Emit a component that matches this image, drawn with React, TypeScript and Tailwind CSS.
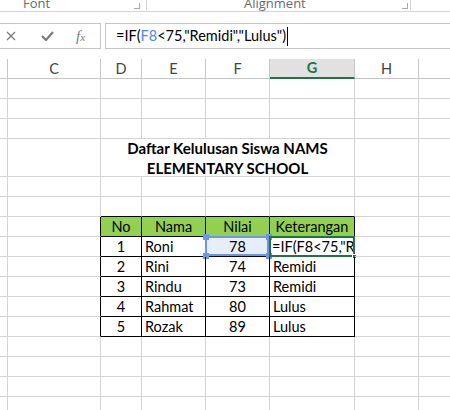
import React from "react"

const W = ["w-[8px]", "w-[93px]", "w-[41px]", "w-[64px]", "w-[64px]", "w-[85px]", "w-[64px]", "w-[64px]"]
const COLS = ["B", "C", "D", "E", "F", "G", "H", "I"]

type Cell = { text?: string; cls?: string; node?: React.ReactNode }

function Row({ cells, h = "h-[20px]" }: { cells: Cell[]; h?: string }) {
  return (
    <div className={`flex ${h}`}>
      {cells.map((c, i) => (
        <div
          key={i}
          className={`relative shrink-0 flex items-center overflow-hidden whitespace-nowrap border-r border-b ${c.cls ?? "border-[#d4d4d4]"} ${W[i]}`}
        >
          {c.node ?? c.text}
        </div>
      ))}
    </div>
  )
}

const empty = (): Cell[] => W.map(() => ({}))

const data = [
  ["1", "Roni", "78", ""],
  ["2", "Rini", "74", "Remidi"],
  ["3", "Rindu", "73", "Remidi"],
  ["4", "Rahmat", "80", "Lulus"],
  ["5", "Rozak", "89", "Lulus"],
]

function Handle({ pos }: { pos: string }) {
  return <div className={`absolute w-[6px] h-[6px] bg-[#6d95e8] ${pos}`} />
}

export default function App() {
  const tb = "border-black"
  return (
    <div className="w-[450px] h-[410px] overflow-hidden bg-white font-['Lato',sans-serif] text-[14.5px] text-black">
      {/* ribbon group labels, cut off at the top like the screenshot */}
      <div className="relative h-[12px] border-b border-[#d5d5d5] overflow-hidden font-['Open_Sans',sans-serif] text-[13px] text-[#6a6a6a]">
        <span className="absolute left-[23px] -top-[6px]">Font</span>
        <div className="absolute left-[134px] top-[3px] w-[6px] h-[6px] border-r border-b border-[#a8a8a8]" />
        <div className="absolute left-[146px] top-0 h-[10px] border-l border-[#d5d5d5]" />
        <span className="absolute left-[244px] -top-[6px]">Alignment</span>
        <div className="absolute left-[402px] top-[3px] w-[6px] h-[6px] border-r border-b border-[#a8a8a8]" />
        <div className="absolute left-[410px] top-0 h-[10px] border-l border-[#d5d5d5]" />
      </div>
      <div className="h-[11px]" />
      {/* formula bar */}
      <div className="flex h-[26px]">
        <div className="w-[101px] shrink-0 border border-l-0 border-[#c6c6c6] flex items-center text-[#7b7b7b]">
          <svg width="10" height="10" viewBox="0 0 10 10" className="ml-[6px]">
            <path d="M1 1L9 9M9 1L1 9" stroke="#7b7b7b" strokeWidth="1.3" />
          </svg>
          <svg width="13" height="10" viewBox="0 0 13 10" className="ml-[25px]">
            <path d="M1 5L5 9L12 1" stroke="#7b7b7b" strokeWidth="2.2" fill="none" />
          </svg>
          <span className="ml-[22px] italic font-['Liberation_Serif',serif] text-[15px] leading-none">
            f<span className="text-[11px]">x</span>
          </span>
        </div>
        <div className="w-[4px] shrink-0" />
        <div className="flex-1 border border-r-0 border-[#c6c6c6] flex items-center pl-[10px]">
          <span>
            =IF(<span className="text-[#4f86ee]">F8</span>&lt;75,"Remidi","Lulus")
          </span>
          <span className="ml-[1px] w-[1px] h-[19px] bg-black" />
        </div>
      </div>
      <div className="h-[10px]" />
      {/* column headers */}
      <div className="flex h-[20px] text-[#444444]">
        {COLS.map((c, i) => (
          <div
            key={c}
            className={`shrink-0 ${W[i]} flex items-center justify-center border-r ${
              c === "G"
                ? "bg-[#e1e1e1] border-b-2 border-b-[#217346] border-r-[#c6c6c6] text-[#217346] font-bold"
                : "border-b border-[#c6c6c6]"
            }`}
          >
            {c === "B" || c === "I" ? "" : c}
          </div>
        ))}
      </div>
      <Row cells={empty()} />
      <Row cells={empty()} />
      <Row cells={empty()} />
      {/* title row, merged D:G */}
      <div className="flex h-[38px]">
        <div className={`shrink-0 ${W[0]} border-r border-b border-[#d4d4d4]`} />
        <div className={`shrink-0 ${W[1]} border-r border-b border-[#d4d4d4]`} />
        <div className="shrink-0 w-[254px] border-r border-b border-[#d4d4d4] flex flex-col items-center justify-center font-bold text-[15px] leading-[20px]">
          <span>Daftar Kelulusan Siswa NAMS</span>
          <span>ELEMENTARY SCHOOL</span>
        </div>
        <div className={`shrink-0 ${W[6]} border-r border-b border-[#d4d4d4]`} />
        <div className={`shrink-0 ${W[7]} border-r border-b border-[#d4d4d4]`} />
      </div>
      <Row cells={empty()} />
      <Row
        cells={empty().map((c, i) => (i >= 2 && i <= 5 ? { cls: `border-r-[#d4d4d4] border-b-black` } : c))}
      />
      {/* table header */}
      <Row
        cells={[
          {},
          { cls: `border-r-black border-b-[#d4d4d4]` },
          { text: "No", cls: `${tb} bg-[#92d050] justify-center` },
          { text: "Nama", cls: `${tb} bg-[#92d050] justify-center` },
          { text: "Nilai", cls: `${tb} bg-[#92d050] justify-center` },
          { text: "Keterangan", cls: `${tb} bg-[#92d050] justify-center` },
          {},
          {},
        ]}
      />
      {data.map((r, ri) => (
        <Row
          key={ri}
          cells={[
            {},
            { cls: `border-r-black border-b-[#d4d4d4]` },
            { text: r[0], cls: `${tb} justify-center` },
            { text: r[1], cls: `${tb} pl-[3px]` },
            ri === 0
              ? {
                  cls: `${tb} justify-center bg-[#e8eef9] overflow-visible`,
                  node: (
                    <>
                      <div className="absolute left-[-1px] top-[-1px] right-[0px] bottom-[0px] border-2 border-[#6d95e8]" />
                      <Handle pos="left-[-3px] top-[-3px]" />
                      <Handle pos="right-[-3px] top-[-3px]" />
                      <Handle pos="left-[-3px] bottom-[-3px]" />
                      <Handle pos="right-[-3px] bottom-[-3px]" />
                      <span className="relative">{r[2]}</span>
                    </>
                  ),
                }
              : { text: r[2], cls: `${tb} justify-center` },
            ri === 0
              ? {
                  cls: `${tb} overflow-visible`,
                  node: (
                    <>
                      <div className="absolute left-[-1px] top-[-1px] right-[-1px] bottom-[-1px] border-2 border-[#217346]" />
                      <div className="absolute right-[-3px] bottom-[-3px] w-[5px] h-[5px] bg-[#217346] border border-white" />
                      <span className="relative pl-[2px] w-[83px] overflow-hidden">=IF(F8&lt;75,"Remidi","Lulus")</span>
                    </>
                  ),
                }
              : { text: r[3], cls: `${tb} pl-[3px]` },
            {},
            {},
          ]}
        />
      ))}
      <Row cells={empty()} />
      <Row cells={empty()} />
      <Row cells={empty()} />
      <Row cells={empty()} />
    </div>
  )
}
